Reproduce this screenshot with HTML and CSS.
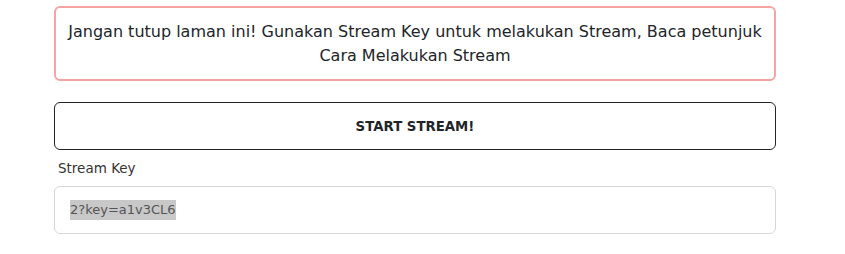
FILE: index.html
```html
<!DOCTYPE html>
<html lang="id">
<head>
<meta charset="utf-8">
<title>Stream</title>
<link rel="stylesheet" href="styles.css">
</head>
<body>
<main class="panel">
  <div class="alert">Jangan tutup laman ini! Gunakan Stream Key untuk melakukan Stream, Baca petunjuk Cara Melakukan Stream</div>
  <button class="start-btn" type="button">START STREAM!</button>
  <label class="field-label">Stream Key</label>
  <div class="key-input"><span class="selected">2?key=a1v3CL6</span></div>
</main>
</body>
</html>
```
FILE: styles.css
```css
html, body {
  margin: 0;
  padding: 0;
  background: #ffffff;
}
body {
  font-family: "DejaVu Sans", "Open Sans", sans-serif;
  color: #212529;
}
.panel {
  width: 722px;
  margin: 6px 0 0 54px;
  display: flex;
  flex-direction: column;
}
.alert {
  box-sizing: border-box;
  height: 75px;
  border: 2px solid #f5a3a3;
  border-radius: 6px;
  padding: 12px 12px;
  text-align: center;
  font-size: 16px;
  line-height: 24px;
  color: #212529;
}
.start-btn {
  box-sizing: border-box;
  margin-top: 21px;
  height: 48px;
  border: 1px solid #212529;
  border-radius: 6px;
  background: #fff;
  font-family: inherit;
  font-size: 13.3px;
  font-weight: bold;
  color: #212529;
}
.field-label {
  margin: 8px 0 0 4px;
  font-size: 13.5px;
  line-height: 20px;
  color: #333;
}
.key-input {
  box-sizing: border-box;
  margin-top: 8px;
  height: 48px;
  border: 1px solid #d6d6d6;
  border-radius: 6px;
  padding: 0 15px;
  display: flex;
  align-items: center;
  font-size: 13px;
  color: #555;
}
.selected {
  background: #c8c8c8;
  line-height: 20px;
}
```
